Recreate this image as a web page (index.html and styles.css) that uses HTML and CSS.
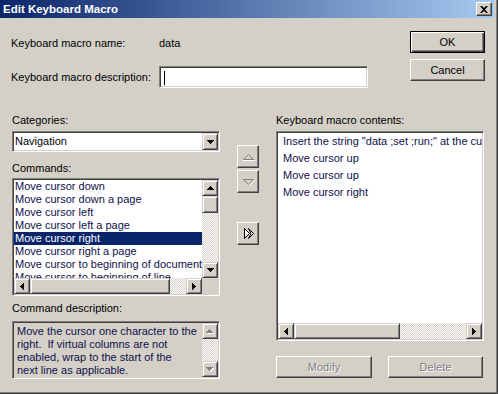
FILE: index.html
```html
<!DOCTYPE html>
<html>
<head>
<meta charset="utf-8">
<link rel="stylesheet" href="styles.css">
</head>
<body>
<div class="window">
  <div class="titlebar">
    <span class="title">Edit Keyboard Macro</span>
    <div class="close raised"><svg width="8" height="7" viewBox="0 0 8 7"><path d="M0 0h2l2 2 2-2h2L5 3.5 8 7H6L4 5 2 7H0l3-3.5z" fill="#000"/></svg></div>
  </div>
  <div class="top">
    <div class="fields">
      <div class="row row-name"><span class="lbl">Keyboard macro name:</span><span>data</span></div>
      <div class="row row-desc"><span class="lbl">Keyboard macro description:</span><div class="textbox sunken"><span class="caret"></span></div></div>
    </div>
    <div class="actions">
      <div class="btn default">OK</div>
      <div class="btn raised">Cancel</div>
    </div>
  </div>
  <div class="main">
    <div class="col left">
      <div class="label">Categories:</div>
      <div class="combo sunken">
        <span class="combo-text">Navigation</span>
        <div class="sbbtn combo-btn"><svg width="7" height="4" viewBox="0 0 7 4"><path d="M0 0h7v1H6v1H5v1H4v1H3V3H2V2H1V1H0z"/></svg></div>
      </div>
      <div class="label label-cmd">Commands:</div>
      <div class="listbox sunken">
        <div class="items">
          <div class="item">Move cursor down</div>
          <div class="item">Move cursor down a page</div>
          <div class="item">Move cursor left</div>
          <div class="item">Move cursor left a page</div>
          <div class="item sel">Move cursor right</div>
          <div class="item">Move cursor right a page</div>
          <div class="item">Move cursor to beginning of document</div>
          <div class="item">Move cursor to beginning of line</div>
        </div>
        <div class="vsb">
          <div class="sbbtn"><svg width="7" height="4" viewBox="0 0 7 4"><path d="M3 0h1v1h1v1h1v1h1v1H0V3h1V2h1V1h1z"/></svg></div>
          <div class="sbbtn thumb-v"></div>
          <div class="track"></div>
          <div class="sbbtn"><svg width="7" height="4" viewBox="0 0 7 4"><path d="M0 0h7v1H6v1H5v1H4v1H3V3H2V2H1V1H0z"/></svg></div>
        </div>
        <div class="hsb">
          <div class="sbbtn"><svg width="4" height="7" viewBox="0 0 4 7"><path d="M3 0h1v7H3V6H2V5H1V4H0V3h1V2h1V1h1z"/></svg></div>
          <div class="sbbtn thumb-h1"></div>
          <div class="track"></div>
          <div class="sbbtn"><svg width="4" height="7" viewBox="0 0 4 7"><path d="M0 0h1v1h1v1h1v1h1v1H3v1H2v1H1v1H0z"/></svg></div>
        </div>
        <div class="corner"></div>
      </div>
      <div class="label label-desc">Command description:</div>
      <div class="descbox sunken">
        <div class="desc-text">Move the cursor one character to the<br>right.&nbsp; If virtual columns are not<br>enabled, wrap to the start of the<br>next line as applicable.</div>
        <div class="vsb">
          <div class="sbbtn"><svg width="8" height="5" viewBox="0 0 8 5"><path d="M4 1h1v1h1v1h1v1h1v1H1V4h1V3h1V2h1z" fill="#fff"/><path d="M3 0h1v1h1v1h1v1h1v1H0V3h1V2h1V1h1z" fill="#808080"/></svg></div>
          <div class="track"></div>
          <div class="sbbtn"><svg width="8" height="5" viewBox="0 0 8 5"><path d="M1 1h7v1H7v1H6v1H5v1H4V4H3V3H2V2H1z" fill="#fff"/><path d="M0 0h7v1H6v1H5v1H4v1H3V3H2V2H1V1H0z" fill="#808080"/></svg></div>
        </div>
      </div>
    </div>
    <div class="col mid">
      <div class="mbtn raised"><svg width="13" height="8" viewBox="0 0 13 8"><path d="M1.5 6.5 6.5 1.5 11.5 6.5Z" fill="#d4d0c8" stroke="#808080"/><path d="M1 7.5h12" stroke="#fff"/></svg></div>
      <div class="mbtn raised mbtn-down"><svg width="13" height="8" viewBox="0 0 13 8"><path d="M1.5 1.5 6.5 6.5 11.5 1.5Z" fill="#d4d0c8" stroke="#808080"/><path d="M7 7.5 12.5 2" stroke="#fff"/></svg></div>
      <div class="mbtn raised mbtn-ff"><svg width="11" height="13" viewBox="0 0 11 13"><path d="M1.5 1.5V11.5L6.5 6.5Z" fill="#fff" stroke="#000"/><path d="M5.5 1.5 10.5 6.5 5.5 11.5 8 6.5Z" fill="#fff" stroke="#000"/></svg></div>
    </div>
    <div class="col right">
      <div class="label">Keyboard macro contents:</div>
      <div class="contents sunken">
        <div class="citems">
          <div class="citem">Insert the string "data ;set ;run;" at the current position</div>
          <div class="citem">Move cursor up</div>
          <div class="citem">Move cursor up</div>
          <div class="citem">Move cursor right</div>
        </div>
        <div class="hsb">
          <div class="sbbtn"><svg width="4" height="7" viewBox="0 0 4 7"><path d="M3 0h1v7H3V6H2V5H1V4H0V3h1V2h1V1h1z"/></svg></div>
          <div class="sbbtn thumb-h2"></div>
          <div class="track"></div>
          <div class="sbbtn"><svg width="4" height="7" viewBox="0 0 4 7"><path d="M0 0h1v1h1v1h1v1h1v1H3v1H2v1H1v1H0z"/></svg></div>
        </div>
      </div>
      <div class="btnrow">
        <div class="btn raised disabled modify">Modify</div>
        <div class="btn raised disabled delete">Delete</div>
      </div>
    </div>
  </div>
</div>
</body>
</html>
```

FILE: styles.css
```css
* { box-sizing: border-box; }
body {
  margin: 0;
  font-family: "Liberation Sans", Arial, sans-serif;
  font-size: 11px;
  color: #000;
}
.window {
  width: 498px;
  height: 394px;
  background: #d4d0c8;
  border-right: 1px solid #404040;
  border-bottom: 1px solid #404040;
  box-shadow: inset -1px -1px #808080;
  overflow: hidden;
}
.raised {
  background: #d4d0c8;
  border: 1px solid;
  border-color: #fff #404040 #404040 #fff;
  box-shadow: inset -1px -1px #808080;
}
.sunken {
  border: 1px solid;
  border-color: #808080 #fff #fff #808080;
  box-shadow: inset 1px 1px #404040, inset -1px -1px #d4d0c8;
  padding: 1px;
}
.titlebar {
  width: 494px;
  height: 18px;
  background: linear-gradient(to right, #0a246a, #a6caf0);
  display: flex;
  align-items: center;
  justify-content: space-between;
  padding: 1px 2px 0 3px;
}
.title {
  color: #fff;
  font-weight: bold;
  font-size: 11.5px;
  line-height: 13px;
}
.close {
  width: 16px;
  height: 14px;
  margin-top: -1px;
  display: flex;
  align-items: center;
  justify-content: center;
}
.top {
  display: flex;
  padding-left: 11px;
  padding-right: 12px;
}
.fields { padding-top: 19px; }
.row { display: flex; align-items: center; }
.row-name { height: 13px; line-height: 13px; }
.row-desc { margin-top: 16px; height: 22px; }
.lbl { width: 148px; flex: none; }
.textbox {
  width: 209px;
  height: 22px;
  background: #fff;
  padding: 3px 4px;
}
.caret {
  display: block;
  width: 1px;
  height: 14px;
  margin-top: 1px;
  background: #000;
}
.actions {
  margin-left: auto;
  padding-top: 13px;
  display: flex;
  flex-direction: column;
  gap: 6px;
}
.btn {
  width: 75px;
  height: 22px;
  display: flex;
  align-items: center;
  justify-content: center;
  line-height: 13px;
}
.btn.default {
  background: #d4d0c8;
  border: 1px solid #000;
  box-shadow: inset 1px 1px #fff, inset -1px -1px #404040, inset -2px -2px #808080;
}
.main {
  display: flex;
  padding-left: 12px;
  margin-top: 26px;
  gap: 17px;
}
.col { display: flex; flex-direction: column; }
.left, .right { width: 208px; }
.mid { width: 22px; padding-top: 31px; }
.label { height: 13px; line-height: 13px; }
.combo {
  margin-top: 4px;
  height: 21px;
  background: #fff;
  display: flex;
}
.combo-text {
  flex: 1;
  line-height: 17px;
  padding-left: 1px;
}
.sbbtn {
  width: 16px;
  height: 16px;
  flex: none;
  background: #d4d0c8;
  border: 1px solid;
  border-color: #d4d0c8 #404040 #404040 #d4d0c8;
  box-shadow: inset 1px 1px #fff, inset -1px -1px #808080;
  display: flex;
  align-items: center;
  justify-content: center;
}
.sbbtn svg { display: block; }
.combo-btn { height: 17px; }
.label-cmd { margin-top: 10px; }
.listbox {
  margin-top: 3px;
  height: 118px;
  background: #fff;
  display: grid;
  grid-template-columns: 188px 16px;
  grid-template-rows: 98px 16px;
}
.items { overflow: hidden; }
.item {
  height: 13px;
  line-height: 13px;
  padding-left: 1px;
  white-space: nowrap;
  color: #10104a;
}
.item.sel { background: #0a246a; color: #fff; }
.vsb { display: flex; flex-direction: column; }
.hsb { display: flex; height: 16px; }
.track {
  flex: 1;
  background: repeating-conic-gradient(#fff 0 25%, #d4d0c8 0 50%) 0 0 / 2px 2px;
}
.thumb-v { height: 17px; }
.thumb-h1 { width: 140px; }
.thumb-h2 { width: 106px; }
.corner { background: #d4d0c8; }
.label-desc { margin-top: 6px; }
.descbox {
  margin-top: 6px;
  height: 58px;
  background: #d4d0c8;
  display: grid;
  grid-template-columns: 188px 16px;
}
.desc-text {
  padding: 2px 0 0 3px;
  line-height: 13px;
  color: #10104a;
  white-space: nowrap;
  overflow: hidden;
}
.mbtn {
  width: 22px;
  height: 23px;
  display: flex;
  align-items: center;
  justify-content: center;
}
.mbtn svg { display: block; }
.mbtn-down { margin-top: 2px; }
.mbtn-ff { margin-top: 29px; }
.contents {
  margin-top: 4px;
  height: 210px;
  background: #fff;
  display: flex;
  flex-direction: column;
}
.citems { flex: 1; overflow: hidden; padding-top: 0; }
.citem {
  height: 17px;
  line-height: 17px;
  padding-left: 5px;
  white-space: nowrap;
  color: #10104a;
}
.btnrow {
  margin-top: 15px;
  display: flex;
  gap: 16px;
}
.modify { width: 96px; }
.delete { width: 95px; }
.disabled {
  color: #808080;
  text-shadow: 1px 1px #fff;
}
```
